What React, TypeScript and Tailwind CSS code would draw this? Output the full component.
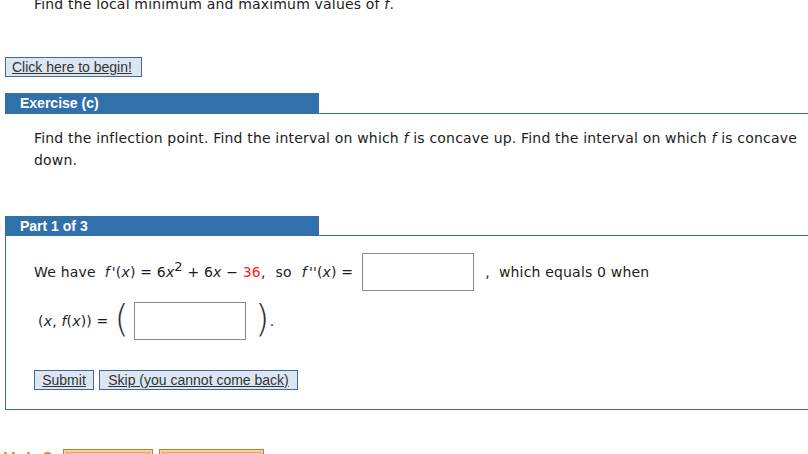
import React from "react";

const blue = "bg-[#3070ab]";

function Btn({ children, className = "" }: { children: React.ReactNode; className?: string }) {
  return (
    <span
      className={
        "inline-flex items-center h-[20px] border border-[#3a6b9c] bg-[#dbe6f2] text-[#333] underline font-['Liberation_Sans',Arial,sans-serif] text-[14px] leading-none tracking-normal " +
        className
      }
    >
      {children}
    </span>
  );
}

function BigParen({ ch }: { ch: string }) {
  return (
    <span className="inline-block text-[37px] leading-none font-extralight text-[#333] -mt-[4px]">{ch}</span>
  );
}

export default function App() {
  return (
    <div className="w-[808px] h-[454px] overflow-hidden bg-white text-[#1c1c1c] font-['DejaVu_Sans',Verdana,sans-serif] text-[14px] leading-[22px] tracking-[0.18px]">
      <p className="pl-[34px] -mt-[7px] whitespace-nowrap">
        Find the local minimum and maximum values of <i>f</i>.
      </p>

      <div className="mt-[41px] ml-[5px]">
        <Btn className="w-[137px] pl-[6px]">Click here to begin!</Btn>
      </div>

      <div className="mt-[15px] flex h-[21px]">
        <div className={`ml-[5px] w-[314px] ${blue} text-white font-bold font-['Liberation_Sans',Arial,sans-serif] text-[14px] leading-[21px] pl-[15px] tracking-normal`}>
          Exercise (c)
        </div>
        <div className="flex-1 border-b border-[#3070ab]" />
      </div>

      <p className="mt-[13px] pl-[34px] whitespace-nowrap">
        Find the inflection point. Find the interval on which <i>f</i> is concave up. Find the interval on which <i>f</i> is concave
        <br />
        down.
      </p>

      <div className="mt-[45px] ml-[5px] w-[830px]">
        <div className="flex h-[20px]">
          <div className={`w-[314px] ${blue} text-white font-bold font-['Liberation_Sans',Arial,sans-serif] text-[14px] leading-[20px] pl-[15px] tracking-normal`}>
            Part 1 of 3
          </div>
          <div className="flex-1 border-b border-[#3070ab]" />
        </div>
        <div className="border-l border-r border-b border-[#3a6b9c] pl-[28px] pt-[17px] pb-[19px]">
          <div className="flex items-center h-[38px] whitespace-nowrap">
            <span>We have</span>
            <span className="ml-[9px]">
              <i>f</i>
              <span className="ml-[2px]">'</span>(<i>x</i>) = 6<i>x</i>
              <span className="relative -top-[6px] text-[13px] leading-none">2</span> + 6<i>x</i> − <span className="text-[#ff2020]">36</span>,
            </span>
            <span className="ml-[10px]">so</span>
            <span className="ml-[10px]">
              <i>f</i>
              <span className="ml-[2px]">''</span>(<i>x</i>) =
            </span>
            <span className="ml-[9px] w-[112px] h-[38px] border border-[#8a8a8a] bg-white" />
            <span className="ml-[11px]">,</span>
            <span className="ml-[9px]">which equals 0 when</span>
          </div>
          <div className="mt-[11px] flex items-center h-[38px] whitespace-nowrap">
            <span className="ml-[4px]">
              (<i>x</i>, <i>f</i>(<i>x</i>)) =
            </span>
            <span className="ml-[6px]">
              <BigParen ch="(" />
            </span>
            <span className="ml-[5px] w-[112px] h-[38px] border border-[#8a8a8a] bg-white" />
            <span className="ml-[9px]">
              <BigParen ch=")" />
            </span>
            <span>.</span>
          </div>
          <div className="mt-[30px] flex gap-[5px]">
            <Btn className="w-[60px] justify-center">Submit</Btn>
            <Btn className="w-[199px] justify-center">Skip (you cannot come back)</Btn>
          </div>
        </div>
      </div>

      <div className="mt-[39px] flex items-start h-[30px]">
        <span className="w-[58px] pl-[3px] text-[#f08a1c] font-bold font-['Liberation_Sans',Arial,sans-serif] text-[18px] leading-[30px] -translate-y-[5px] tracking-normal">Help?</span>
        <div className="ml-[5px] w-[90px] h-[30px] border border-[#c47a32] bg-[#f9cfa2] p-[2px]">
          <div className="w-full h-full border border-[#d9a06a]" />
        </div>
        <div className="ml-[6px] w-[105px] h-[30px] border border-[#c47a32] bg-[#f9cfa2] p-[2px]">
          <div className="w-full h-full border border-[#d9a06a]" />
        </div>
      </div>
    </div>
  );
}
